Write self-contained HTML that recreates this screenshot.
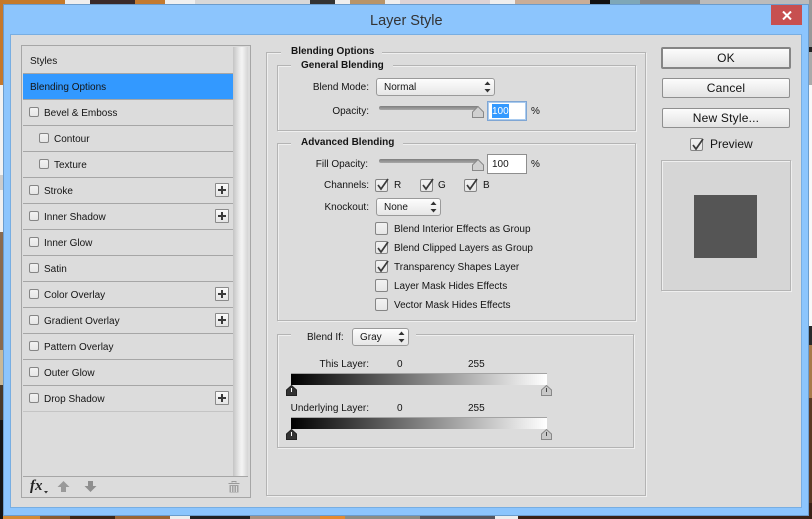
<!DOCTYPE html>
<html><head><meta charset="utf-8"><style>
html,body{margin:0;padding:0;width:812px;height:519px;overflow:hidden;background:#fff}
#a{position:relative;width:812px;height:519px;overflow:hidden;font:10px/14px "Liberation Sans",sans-serif;color:#141414}
#a div,#a span,#a svg{position:absolute}
.t{white-space:nowrap;margin-top:1px}
.r{text-align:right;white-space:nowrap;left:260px;width:109px;margin-top:1px}
.b{font-weight:bold;font-size:10px;line-height:16px;background:#dcdcdc;white-space:nowrap}
.g{border:1px solid #b4b4b4;box-shadow:1px 1px 0 #efefef,inset 1px 1px 0 #efefef;box-sizing:border-box}
.l{left:23px;width:210px;height:1px;background:#a6a6a6}
.c{width:8px;height:8px;border:1px solid #858585;border-radius:2px;background:linear-gradient(#f2f2f2,#e6e6e6)}
.C{width:11px;height:11px;border:1px solid #858585;border-radius:2px;background:linear-gradient(#f2f2f2,#e6e6e6)}
.p{left:215px;width:12px;height:12px;border:1px solid #8a8a8a;border-radius:1px;background:linear-gradient(#fafafa,#e4e4e4)}
.p:before{content:"";position:absolute;left:2px;top:5px;width:8px;height:2px;background:#3a3a3a}
.p:after{content:"";position:absolute;left:5px;top:2px;width:2px;height:8px;background:#3a3a3a}
.btn{box-sizing:border-box;border:1px solid #8f8f8f;border-radius:2px;background:linear-gradient(#fcfcfc,#e3e3e3);text-align:center;font-size:12px;letter-spacing:.2px;color:#111}
.s{box-sizing:border-box;border:1px solid #9a9a9a;border-radius:3px;background:linear-gradient(#fdfdfd,#e6e6e6);padding-left:7px;line-height:18px}
.i{box-sizing:border-box;border:1px solid #8e8e8e;background:#fff;padding-left:4px;line-height:20px}
.tr{left:379px;width:100px;height:4px;border-radius:2px;background:linear-gradient(#7e7e7e,#a8a8a8)}
.gr{left:291px;width:256px;height:11px;border-top:1px solid #a4a4a4;background:linear-gradient(90deg,#000,#fff)}
</style></head><body><div id="a">
<div style="left:0;top:0;width:812px;height:5px;background:linear-gradient(90deg,#c57a2a 0 65px,#eee 65px 90px,#3a2a2a 90px 135px,#c37a30 135px 165px,#f0f0f0 165px 195px,#d8d8d8 195px 310px,#333 310px 335px,#eee 335px 350px,#b89468 350px 385px,#eee 385px 400px,#ddd3d6 400px 490px,#eee 490px 515px,#c9ad97 515px 590px,#111 590px 610px,#7ea7b8 610px 640px,#888 640px 700px,#bbb 700px 812px)"></div>
<div style="left:0;top:515px;width:812px;height:4px;background:linear-gradient(90deg,#d48a35 0 40px,#8a5a30 40px 70px,#3d2616 70px 115px,#9a6434 115px 170px,#eee 170px 190px,#222 190px 250px,#a89080 250px 320px,#e58a30 320px 345px,#8d8d85 345px 420px,#55565e 420px 495px,#eee 495px 518px,#3b2216 518px 812px)"></div>
<div style="left:0;top:0;width:3px;height:519px;background:linear-gradient(#c5782c 0 85px,#f2f2f2 85px 175px,#ccc 175px 190px,#f0f0f0 190px 232px,#8a6a4e 232px 350px,#c8b898 350px 385px,#4a3a2a 385px 420px,#151515 420px 519px)"></div>
<div style="left:809px;top:0;width:3px;height:519px;background:linear-gradient(#999 0 47px,#222 47px 52px,#aaa 52px 85px,#f8f8f8 85px 326px,#2a2a2a 326px 345px,#a87a4a 345px 398px,#5a3a24 398px 503px,#3a2216 503px 519px)"></div>

<div style="left:3px;top:4px;width:806px;height:512px;box-sizing:border-box;border:1px solid #6b9ccc;background:#8cc5fd"></div>
<div style="left:10px;top:34px;width:792px;height:474px;box-sizing:border-box;border:1px solid #78aee2;background:#dcdcdc"></div>
<div class="t" style="left:370px;top:11px;font-size:14.5px;line-height:18px;color:#333">Layer Style</div>
<div style="left:771px;top:5px;width:31px;height:20px;background:#c75050"></div>
<svg style="left:782px;top:11px" width="10" height="9" viewBox="0 0 10 9"><path d="M1 .5L9 8.5M9 .5L1 8.5" stroke="#fff" stroke-width="2"/></svg>

<!-- left list -->
<div style="left:21px;top:45px;width:230px;height:453px;box-sizing:border-box;border:1px solid #a6a6a6"></div>
<div style="left:233px;top:47px;width:15px;height:429px;background:linear-gradient(90deg,#c4c4c4,#ececec 45%,#f4f4f4 60%,#d4d4d4)"></div>
<div style="left:23px;top:476px;width:225px;height:1px;background:#a6a6a6"></div>
<div style="left:23px;top:74px;width:210px;height:25px;background:#3399ff"></div>
<div class="l" style="top:73px"></div><div class="l" style="top:99px"></div><div class="l" style="top:125px"></div><div class="l" style="top:151px"></div><div class="l" style="top:177px"></div><div class="l" style="top:203px"></div><div class="l" style="top:229px"></div><div class="l" style="top:255px"></div><div class="l" style="top:281px"></div><div class="l" style="top:307px"></div><div class="l" style="top:333px"></div><div class="l" style="top:359px"></div><div class="l" style="top:385px"></div><div class="l" style="top:411px;background:#c4c4c4"></div>
<span class="t" style="left:30px;top:54px">Styles</span>
<span class="t" style="left:30px;top:80px">Blending Options</span>
<div class="c" style="left:29px;top:107px"></div><span class="t" style="left:44px;top:106px">Bevel &amp; Emboss</span>
<div class="c" style="left:39px;top:133px"></div><span class="t" style="left:54px;top:132px">Contour</span>
<div class="c" style="left:39px;top:159px"></div><span class="t" style="left:54px;top:158px">Texture</span>
<div class="c" style="left:29px;top:185px"></div><span class="t" style="left:44px;top:184px">Stroke</span><div class="p" style="top:183px"></div>
<div class="c" style="left:29px;top:211px"></div><span class="t" style="left:44px;top:210px">Inner Shadow</span><div class="p" style="top:209px"></div>
<div class="c" style="left:29px;top:237px"></div><span class="t" style="left:44px;top:236px">Inner Glow</span>
<div class="c" style="left:29px;top:263px"></div><span class="t" style="left:44px;top:262px">Satin</span>
<div class="c" style="left:29px;top:289px"></div><span class="t" style="left:44px;top:288px">Color Overlay</span><div class="p" style="top:287px"></div>
<div class="c" style="left:29px;top:315px"></div><span class="t" style="left:44px;top:314px">Gradient Overlay</span><div class="p" style="top:313px"></div>
<div class="c" style="left:29px;top:341px"></div><span class="t" style="left:44px;top:340px">Pattern Overlay</span>
<div class="c" style="left:29px;top:367px"></div><span class="t" style="left:44px;top:366px">Outer Glow</span>
<div class="c" style="left:29px;top:393px"></div><span class="t" style="left:44px;top:392px">Drop Shadow</span><div class="p" style="top:391px"></div>
<span class="t" style="left:30px;top:477px;font:italic bold 15px/16px 'Liberation Serif',serif;color:#222">fx</span>
<svg style="left:44px;top:491px" width="4" height="3"><path d="M0 0H4L2 2.5Z" fill="#333"/></svg>
<svg style="left:57px;top:481px" width="13" height="11" viewBox="0 0 13 11"><path d="M6.5 0L12.5 6H9V11H4V6H.5Z" fill="#999"/></svg>
<svg style="left:84px;top:481px" width="13" height="11" viewBox="0 0 13 11"><path d="M6.5 11L12.5 5H9V0H4V5H.5Z" fill="#8f8f8f"/></svg>
<svg style="left:228px;top:481px" width="12" height="12" viewBox="0 0 12 12"><path d="M4 1.5V.5H8V1.5M.5 2.5H11.5" stroke="#999" fill="none"/><path d="M1.5 4H10.5V11.5H1.5Z" fill="#a2a2a2"/><path d="M3.5 5V11M6 5V11M8.5 5V11" stroke="#dcdcdc"/></svg>

<!-- groups -->
<div class="g" style="left:266px;top:52px;width:380px;height:444px"></div>
<span class="b" style="left:281px;top:44px;padding:0 8px 0 10px">Blending Options</span>
<div class="g" style="left:277px;top:65px;width:359px;height:66px"></div>
<span class="b" style="left:291px;top:58px;padding:0 9px 0 10px">General Blending</span>
<div class="g" style="left:277px;top:143px;width:359px;height:178px"></div>
<span class="b" style="left:291px;top:135px;padding:0 9px 0 10px">Advanced Blending</span>
<div class="g" style="left:277px;top:334px;width:357px;height:114px"></div>
<div style="left:291px;top:330px;width:125px;height:10px;background:#dcdcdc"></div>

<span class="r" style="top:80px">Blend Mode:</span>
<div class="s" style="left:376px;top:78px;width:119px;height:18px">Normal</div>
<svg style="left:484px;top:81px" width="7" height="12" viewBox="0 0 7 12"><path d="M3.5 .5L6.5 4H.5ZM3.5 11.5L6.5 8H.5Z" fill="#333"/></svg>
<span class="r" style="top:104px">Opacity:</span>
<div class="tr" style="top:106px"></div>
<svg style="left:472px;top:106px" width="12" height="12" viewBox="0 0 12 12"><path d="M6 .5L11.5 6V11.5H.5V6Z" fill="#d0d0d0" stroke="#888"/></svg>
<div class="i" style="left:487px;top:101px;width:40px;height:20px;border:1px solid #7fa6d4;box-shadow:0 0 0 1px #a9cbef inset"></div>
<span style="left:492px;top:104px;width:17px;height:14px;line-height:16px;background:#3399ff;color:#fff;white-space:nowrap">100</span>
<span class="t" style="left:531px;top:104px">%</span>

<span class="r" style="top:157px;left:259px">Fill Opacity:</span>
<div class="tr" style="top:159px"></div>
<svg style="left:472px;top:159px" width="12" height="12" viewBox="0 0 12 12"><path d="M6 .5L11.5 6V11.5H.5V6Z" fill="#d0d0d0" stroke="#888"/></svg>
<div class="i" style="left:487px;top:154px;width:40px;height:20px">100</div>
<span class="t" style="left:531px;top:157px">%</span>

<span class="r" style="top:178px">Channels:</span>
<div class="C" style="left:375px;top:179px"></div><span class="t" style="left:394px;top:178px">R</span>
<div class="C" style="left:420px;top:179px"></div><span class="t" style="left:438px;top:178px">G</span>
<div class="C" style="left:464px;top:179px"></div><span class="t" style="left:483px;top:178px">B</span>
<span class="r" style="top:200px">Knockout:</span>
<div class="s" style="left:376px;top:198px;width:65px;height:18px">None</div>
<svg style="left:430px;top:201px" width="7" height="12" viewBox="0 0 7 12"><path d="M3.5 .5L6.5 4H.5ZM3.5 11.5L6.5 8H.5Z" fill="#333"/></svg>

<div class="C" style="left:375px;top:222px"></div><span class="t" style="left:394px;top:222px">Blend Interior Effects as Group</span>
<div class="C" style="left:375px;top:241px"></div><span class="t" style="left:394px;top:241px">Blend Clipped Layers as Group</span>
<div class="C" style="left:375px;top:260px"></div><span class="t" style="left:394px;top:260px">Transparency Shapes Layer</span>
<div class="C" style="left:375px;top:279px"></div><span class="t" style="left:394px;top:279px">Layer Mask Hides Effects</span>
<div class="C" style="left:375px;top:298px"></div><span class="t" style="left:394px;top:298px">Vector Mask Hides Effects</span>

<svg style="left:370px;top:176px" width="120" height="100" viewBox="0 0 120 100" fill="none" stroke="#3a3a3a" stroke-width="1.7"><path d="M8 9L11 13L18 3"/><path d="M53 9L56 13L63 3"/><path d="M97 9L100 13L107 3"/><path d="M8 72L11 76L18 66"/><path d="M8 91L11 95L18 85"/></svg>

<span class="t" style="left:307px;top:330px">Blend If:</span>
<div class="s" style="left:352px;top:328px;width:57px;height:18px">Gray</div>
<svg style="left:398px;top:331px" width="7" height="12" viewBox="0 0 7 12"><path d="M3.5 .5L6.5 4H.5ZM3.5 11.5L6.5 8H.5Z" fill="#333"/></svg>
<span class="r" style="top:357px">This Layer:</span><span class="t" style="left:397px;top:357px">0</span><span class="t" style="left:468px;top:357px">255</span>
<div class="gr" style="top:373px"></div>
<span class="r" style="top:401px">Underlying Layer:</span><span class="t" style="left:397px;top:401px">0</span><span class="t" style="left:468px;top:401px">255</span>
<div class="gr" style="top:417px"></div>
<svg style="left:286px;top:385px" width="266" height="56" viewBox="0 0 266 56"><path d="M5.5 .5L10.5 5V10.5H.5V5Z" fill="#333" stroke="#222"/><path d="M5.5 3V7" stroke="#fff"/><path d="M260.5 .5L265.5 5V10.5H255.5V5Z" fill="#c8c8c8" stroke="#888"/><path d="M260.5 3V7" stroke="#444"/><path d="M5.5 44.5L10.5 49V54.5H.5V49Z" fill="#333" stroke="#222"/><path d="M5.5 47V51" stroke="#fff"/><path d="M260.5 44.5L265.5 49V54.5H255.5V49Z" fill="#c8c8c8" stroke="#888"/><path d="M260.5 47V51" stroke="#444"/></svg>

<!-- right column -->
<div class="btn" style="left:661px;top:47px;width:130px;height:22px;border:2px solid #858585;line-height:18px">OK</div>
<div class="btn" style="left:662px;top:78px;width:128px;height:20px;line-height:18px">Cancel</div>
<div class="btn" style="left:662px;top:108px;width:128px;height:20px;line-height:18px">New Style...</div>
<div class="C" style="left:690px;top:138px"></div>
<svg style="left:690px;top:136px" width="16" height="16" fill="none" stroke="#3a3a3a" stroke-width="1.7"><path d="M3 9L6 13L13 3"/></svg>
<span style="left:710px;top:137px;font-size:12px;white-space:nowrap">Preview</span>
<div class="g" style="left:661px;top:160px;width:130px;height:131px;background:#d6d6d6"></div>
<div style="left:694px;top:195px;width:63px;height:63px;background:#555"></div>
</div></body></html>
